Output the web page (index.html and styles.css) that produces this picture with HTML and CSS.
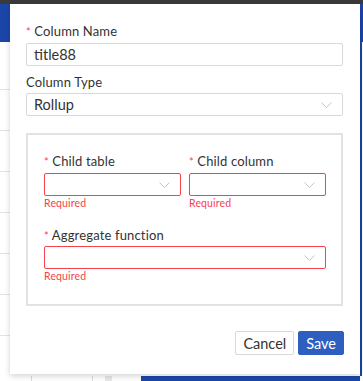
FILE: index.html
```html
<!DOCTYPE html>
<html lang="en">
<head>
    <meta charset="UTF-8">
    <meta name="viewport" content="width=device-width, initial-scale=1.0">
    <title>Add Column</title>
    <link rel="stylesheet" href="styles.css">
</head>
<body>
    <div class="topbar"></div>
    <div class="page">
        <header class="header"></header>
        <div class="grid">
            <div class="row"></div>
            <div class="row"></div>
            <div class="row"></div>
            <div class="row"></div>
            <div class="row"></div>
            <div class="row"></div>
            <div class="row"></div>
        </div>
        <div class="footer">
            <div class="cell"></div>
            <div class="cell"></div>
            <div class="scroll"></div>
            <div class="bottombar"></div>
        </div>
    </div>

    <!-- Column edit modal -->
    <div class="modal">
        <div class="field">
            <label class="label"><span class="req">*</span> Column Name</label>
            <div class="input">title88</div>
        </div>
        <div class="field">
            <label class="label tight">Column Type</label>
            <div class="input select">Rollup
                <svg class="chev" width="11" height="6" viewBox="0 0 11 6"><path d="M0.5 0.5 L5.5 5.5 L10.5 0.5" fill="none" stroke="#c4c4c4" stroke-width="1"/></svg>
            </div>
        </div>

        <div class="rollup-box">
            <div class="pair">
                <div class="field">
                    <label class="label"><span class="req">*</span> Child table</label>
                    <div class="input select error">
                        <svg class="chev" width="11" height="6" viewBox="0 0 11 6"><path d="M0.5 0.5 L5.5 5.5 L10.5 0.5" fill="none" stroke="#c4c4c4" stroke-width="1"/></svg>
                    </div>
                    <div class="hint">Required</div>
                </div>
                <div class="field">
                    <label class="label"><span class="req">*</span> Child column</label>
                    <div class="input select error">
                        <svg class="chev" width="11" height="6" viewBox="0 0 11 6"><path d="M0.5 0.5 L5.5 5.5 L10.5 0.5" fill="none" stroke="#c4c4c4" stroke-width="1"/></svg>
                    </div>
                    <div class="hint">Required</div>
                </div>
            </div>
            <div class="field agg">
                <label class="label tight"><span class="req">*</span> Aggregate function</label>
                <div class="input select error">
                    <svg class="chev" width="11" height="6" viewBox="0 0 11 6"><path d="M0.5 0.5 L5.5 5.5 L10.5 0.5" fill="none" stroke="#c4c4c4" stroke-width="1"/></svg>
                </div>
                <div class="hint">Required</div>
            </div>
        </div>

        <div class="actions">
            <button class="btn">Cancel</button>
            <button class="btn primary">Save</button>
        </div>
    </div>
</body>
</html>
```

FILE: styles.css
```css
body {
    margin: 0;
    font-family: 'Lato', 'Liberation Sans', sans-serif;
    color: #333;
    background-color: #fff;
    width: 363px;
    height: 381px;
    overflow: hidden;
    position: relative;
}
.topbar {
    height: 4px;
    background-color: #3a3a3a;
}
.page {
    display: flex;
    flex-direction: column;
    height: 377px;
}
.header {
    height: 56px;
    background-color: #1b46a9;
}
.grid {
    flex: 1;
    padding-top: 47px;
    margin-right: 1px;
    border-right: 2px solid #1b46a9;
}
.row {
    height: 40px;
    border-top: 1px solid #e3e3e3;
}
.footer {
    display: flex;
    height: 8px;
}
.cell {
    width: 31px;
    border-right: 1px solid #dcdcdc;
}
.cell + .cell {
    width: 60px;
}
.scroll {
    width: 7px;
    margin-left: 12px;
    background-color: #e8e8e8;
}
.bottombar {
    flex: 1;
    margin-left: 29px;
    margin-right: 3px;
    background-color: #1b46a9;
}
.modal {
    position: absolute;
    left: 10px;
    top: 4px;
    width: 350px;
    height: 370px;
    box-sizing: border-box;
    padding: 19px 17px 0 16px;
    background-color: #fff;
    box-shadow: 0 2px 6px rgba(0,0,0,0.18);
}
.field {
    margin-bottom: 8px;
}
.label {
    display: block;
    height: 16px;
    font-size: 13px;
    line-height: 16px;
    letter-spacing: 0.15px;
    margin-bottom: 4px;
    color: #333;
}
.label.tight {
    margin-bottom: 3px;
}
.req {
    color: #f5424b;
    font-size: 11px;
    line-height: 1;
}
.input {
    position: relative;
    height: 23px;
    box-sizing: border-box;
    border: 1px solid #d9d9d9;
    border-radius: 2px;
    padding: 0 7px;
    font-size: 14.5px;
    line-height: 21px;
    color: #333;
}
.select .chev {
    position: absolute;
    right: 10px;
    top: 8px;
}
.error {
    border-color: #f5424b;
}
.hint {
    height: 14px;
    font-size: 10.5px;
    line-height: 14px;
    letter-spacing: 0.15px;
    color: #f5424b;
}
.rollup-box {
    margin-top: 17px;
    border: 2px solid #e1e2e7;
    padding: 18px 15px 13px 16px;
}
.pair {
    display: flex;
    gap: 8px;
}
.pair .field {
    flex: 1;
    margin-bottom: 17px;
}
.actions {
    display: flex;
    justify-content: flex-end;
    gap: 4px;
    margin-top: 25px;
    margin-right: -1px;
}
.btn {
    height: 24px;
    padding: 0 7px;
    font-family: 'Lato', 'Liberation Sans', sans-serif;
    font-size: 14.5px;
    color: #333;
    background-color: #fff;
    border: 1px solid #d9d9d9;
    border-radius: 2px;
    cursor: pointer;
}
.btn.primary {
    background-color: #2d5fc0;
    border-color: #2d5fc0;
    color: #fff;
}
```
